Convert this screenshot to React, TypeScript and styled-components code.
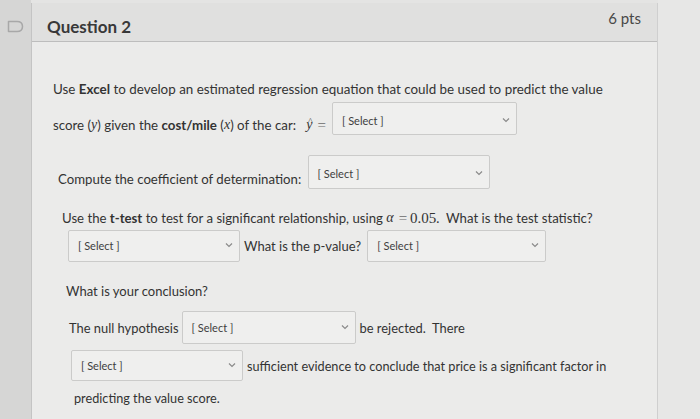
import React from "react";
import styled, { createGlobalStyle } from "styled-components";

const GlobalStyle = createGlobalStyle`
  html, body {
    margin: 0;
    padding: 0;
    background: #e4e4e3;
  }
  body {
    font-family: Lato, "Open Sans", sans-serif;
    color: #333;
  }
`;

const Page = styled.div`
  display: flex;
  width: 700px;
  height: 419px;
  overflow: hidden;
`;

const Gutter = styled.div`
  width: 31px;
  flex-shrink: 0;
  background: #d6d6d5;
  padding-top: 20px;
  display: flex;
  justify-content: center;
  box-sizing: border-box;
`;

const Card = styled.div`
  width: 625px;
  margin-top: 3px;
  background: #ebebea;
  border-left: 1px solid #c4c4c4;
  border-right: 1px solid #cfcfcf;
  display: flex;
  flex-direction: column;
`;

const Header = styled.div`
  height: 39px;
  background: #e0e0df;
  border-bottom: 1px solid #bdbdbd;
  display: flex;
  align-items: center;
  justify-content: space-between;
  padding: 0 16px 0 15px;
  box-sizing: border-box;
`;

const Title = styled.div`
  font-size: 17px;
  font-weight: 700;
  color: #383838;
  margin-top: 8px;
`;

const Points = styled.div`
  font-size: 15px;
  color: #484848;
  margin-top: -8px;
`;

const Body = styled.div`
  display: flex;
  flex-direction: column;
  padding-top: 37px;
`;

const Line = styled.div<{ indent: number; gap?: number; h?: number; size?: number; low?: boolean }>`
  display: flex;
  align-items: ${(p) => (p.low ? "flex-end" : "center")};
  padding-left: ${(p) => p.indent}px;
  margin-top: ${(p) => p.gap ?? 0}px;
  height: ${(p) => p.h ?? 20}px;
  line-height: 20px;
  font-size: ${(p) => p.size ?? 13}px;
  white-space: nowrap;
`;

const Math = styled.span`
  font-family: "Liberation Serif", serif;
  font-style: italic;
  font-size: 14px;
`;

const Num = styled.span`
  font-family: "Liberation Serif", serif;
  font-size: 15px;
`;

const Eq = styled.span`
  font-family: "Liberation Serif", serif;
  font-size: 15px;
  color: #6a6a6a;
  margin: 0 3px 0 5px;
`;

const Hat = styled.span`
  position: relative;
  display: inline-block;
  &::before {
    content: "^";
    position: absolute;
    left: 2px;
    top: -4px;
    font-style: normal;
    font-size: 9px;
  }
`;

const SelectBox = styled.div<{ w: number; h?: number; drop?: number }>`
  width: ${(p) => p.w}px;
  height: ${(p) => p.h ?? 32}px;
  box-sizing: border-box;
  border: 1px solid #cbcbca;
  border-radius: 2px;
  background: #efefee;
  display: flex;
  align-items: center;
  justify-content: space-between;
  padding: ${(p) => p.drop ?? 0}px 6px 0 9px;
  margin: 0 4px 0 3px;
  font-size: 11px;
  color: #3e3e3e;
  flex-shrink: 0;
  align-self: center;
`;

const Arrow = styled.svg`
  margin-top: -2px;
`;

function Chevron() {
  return (
    <Arrow width="8" height="6" viewBox="0 0 8 6">
      <path d="M1 1.5 L4 4.5 L7 1.5" fill="none" stroke="#8a8a8a" strokeWidth="1.2" />
    </Arrow>
  );
}

function Select({ w, h, drop }: { w: number; h?: number; drop?: number }) {
  return (
    <SelectBox w={w} h={h} drop={drop}>
      <span>[ Select ]</span>
      <Chevron />
    </SelectBox>
  );
}

function Flag() {
  return (
    <svg width="17" height="13" viewBox="0 0 17 13">
      <path
        d="M1.5 1.5 H10 Q15.5 1.5 15.5 6.5 Q15.5 11.5 10 11.5 H1.5 Z"
        fill="none"
        stroke="#a8a8a8"
        strokeWidth="1.5"
        strokeLinejoin="round"
      />
    </svg>
  );
}

const RightSide = styled.div`
  flex: 1;
  background: #e7e7e6;
`;

export default function App() {
  return (
    <>
      <GlobalStyle />
      <Page>
        <Gutter>
          <Flag />
        </Gutter>
        <Card>
          <Header>
            <Title>Question 2</Title>
            <Points>6 pts</Points>
          </Header>
          <Body>
            <Line indent={21} size={13.4}>
              Use&nbsp;<b>Excel</b>&nbsp;to develop an estimated regression equation that could be used to predict the value
            </Line>
            <Line indent={21} gap={3} h={33} size={13.3} low>
              score (<Math>y</Math>) given the&nbsp;<b>cost/mile</b>&nbsp;(<Math>x</Math>) of the car:&nbsp;&nbsp;&nbsp;
              <Math>
                <Hat>y</Hat>
              </Math>
              <Eq>=</Eq>
              <Select w={185} h={33} drop={5} />
            </Line>
            <Line indent={26} gap={20} h={34} size={13.2} low>
              Compute the coefficient of determination:&nbsp;
              <Select w={182} h={34} drop={4} />
            </Line>
            <Line indent={30} gap={19} size={13.2}>
              Use the&nbsp;<b>t-test</b>&nbsp;to test for a significant relationship, using&nbsp;
              <Math>α</Math>
              <Eq>=</Eq>
              <Num>0.05</Num>. &nbsp;What is the test statistic?
            </Line>
            <Line indent={33} gap={2} h={32} size={13}>
              <Select w={172} />
              What is the p-value?&nbsp;
              <Select w={179} />
            </Line>
            <Line indent={34} gap={19} size={13}>
              What is your conclusion?
            </Line>
            <Line indent={37} gap={10} h={33} size={12.9}>
              The null hypothesis
              <Select w={174} h={33} />
              be rejected.&nbsp; There
            </Line>
            <Line indent={36} gap={6} h={31} size={12.7}>
              <Select w={172} h={31} />
              sufficient evidence to conclude that price is a significant factor in
            </Line>
            <Line indent={42} gap={7} size={12.7}>
              predicting the value score.
            </Line>
          </Body>
        </Card>
        <RightSide />
      </Page>
    </>
  );
}
